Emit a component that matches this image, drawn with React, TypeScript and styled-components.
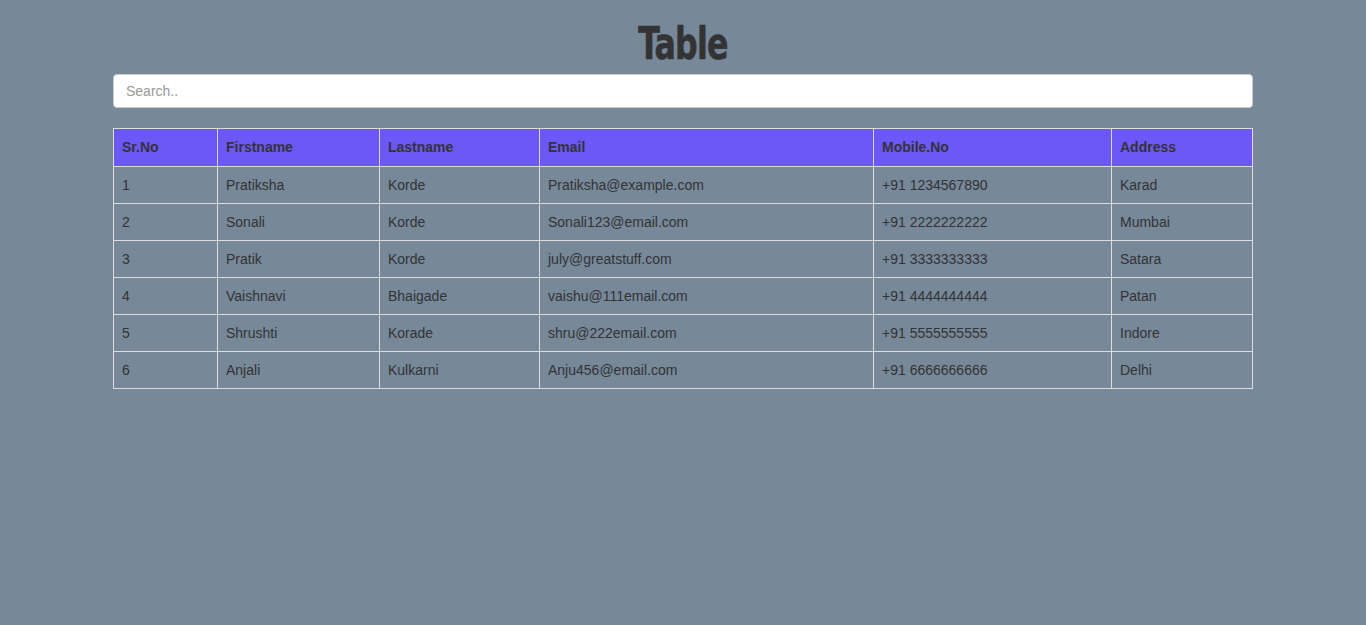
import React from "react";
import styled, { createGlobalStyle } from "styled-components";

const Global = createGlobalStyle`
  html, body { margin: 0; padding: 0; background: #778899; }
  body { font-family: "Liberation Sans", Arial, sans-serif; color: #333; }
`;

const Page = styled.div`
  width: 1140px;
  margin: 0 auto;
  padding-top: 14px;
`;

const Title = styled.h1`
  margin: 0;
  height: 60px;
  text-align: center;
  font-family: Impact, "DejaVu Sans Condensed", "DejaVu Sans", sans-serif;
  font-stretch: condensed;
  font-weight: 700;
  font-size: 44px;
  line-height: 60px;
  color: #333;
`;

const TitleText = styled.span`
  display: inline-block;
  transform: scaleX(0.8);
  letter-spacing: -1px;
  -webkit-text-stroke: 0.6px #333;
`;

const Search = styled.input`
  box-sizing: border-box;
  display: block;
  width: 100%;
  height: 34px;
  padding: 0 12px;
  border: 1px solid #ccc;
  border-radius: 4px;
  background: #fff;
  font-family: "Liberation Sans", Arial, sans-serif;
  font-size: 14px;
  color: #555;
  outline: none;
  &::placeholder { color: #999; }
`;

const Table = styled.table`
  margin-top: 20px;
  width: 1140px;
  border-collapse: collapse;
  table-layout: fixed;
  font-size: 14px;
`;

const Th = styled.th<{ $w: number }>`
  width: ${(p) => p.$w}px;
  box-sizing: border-box;
  height: 38px;
  padding: 0 8px 1px 8px;
  text-align: left;
  background: #6c58f8;
  border: 1px solid #ddd;
  font-weight: 700;
  color: #333;
`;

const Td = styled.td`
  height: 36px;
  padding: 0 8px;
  border: 1px solid #ddd;
  color: #333;
`;

const cols: [string, number][] = [
  ["Sr.No", 104],
  ["Firstname", 162],
  ["Lastname", 160],
  ["Email", 334],
  ["Mobile.No", 238],
  ["Address", 141],
];

const rows = [
  ["1", "Pratiksha", "Korde", "Pratiksha@example.com", "+91 1234567890", "Karad"],
  ["2", "Sonali", "Korde", "Sonali123@email.com", "+91 2222222222", "Mumbai"],
  ["3", "Pratik", "Korde", "july@greatstuff.com", "+91 3333333333", "Satara"],
  ["4", "Vaishnavi", "Bhaigade", "vaishu@111email.com", "+91 4444444444", "Patan"],
  ["5", "Shrushti", "Korade", "shru@222email.com", "+91 5555555555", "Indore"],
  ["6", "Anjali", "Kulkarni", "Anju456@email.com", "+91 6666666666", "Delhi"],
];

export default function App() {
  return (
    <>
      <Global />
      <Page>
        <Title>
          <TitleText>Table</TitleText>
        </Title>
        <Search placeholder="Search.." />
        <Table>
          <thead>
            <tr>
              {cols.map(([c, w]) => (
                <Th key={c} $w={w}>{c}</Th>
              ))}
            </tr>
          </thead>
          <tbody>
            {rows.map((r) => (
              <tr key={r[0]}>
                {r.map((v, i) => (
                  <Td key={i}>{v}</Td>
                ))}
              </tr>
            ))}
          </tbody>
        </Table>
      </Page>
    </>
  );
}
